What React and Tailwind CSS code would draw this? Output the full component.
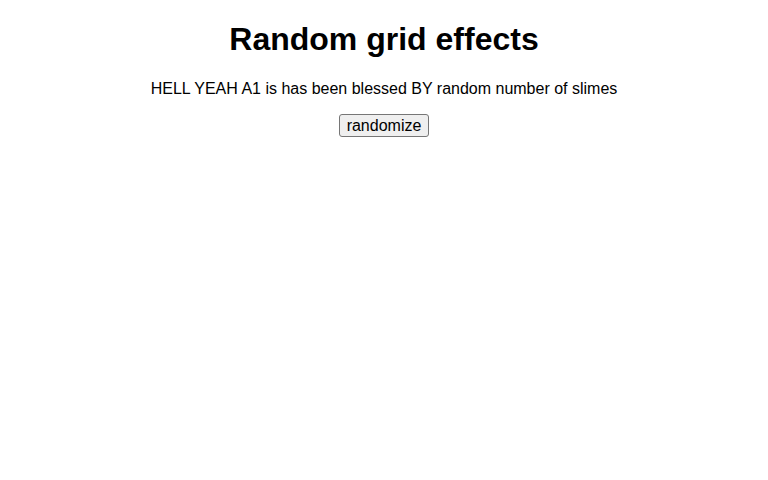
import React, { useState } from "react";

const messages = [
  "HELL YEAH A1 is has been blessed BY random number of slimes",
];

const App = () => {
  const [msg, setMsg] = useState(messages[0]);

  return (
    <div className="text-center text-black bg-white min-h-screen font-['Liberation_Sans',Arial,sans-serif]">
      <h1 className="text-[32px] leading-[37px] font-bold pt-[21px]">Random grid effects</h1>
      <p className="text-base leading-[18px] mt-[22px]">{msg}</p>
      <div className="mt-4">
        <button
          onClick={() => setMsg(messages[Math.floor(Math.random() * messages.length)])}
          className="text-base leading-[19px] px-[7px] py-[1px] bg-[#efefef] border border-[#767676] rounded-[3px]"
        >
          randomize
        </button>
      </div>
    </div>
  );
};

export default App;
